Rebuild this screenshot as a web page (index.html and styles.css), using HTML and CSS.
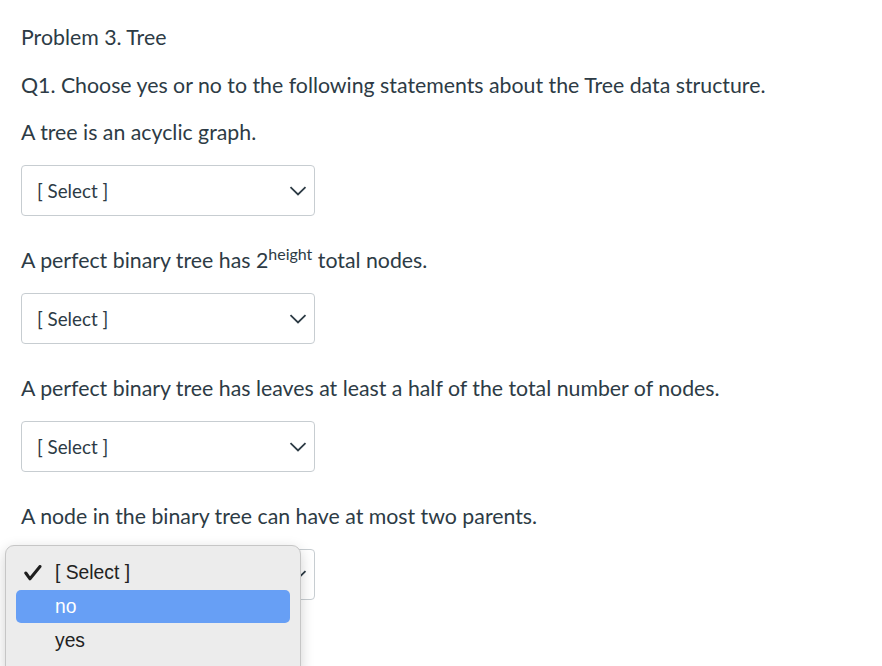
FILE: index.html
```html
<!DOCTYPE html>
<html>
<head>
<meta charset="utf-8">
<link rel="stylesheet" href="styles.css">
</head>
<body>
<div class="page">
  <p class="line">Problem 3. Tree</p>
  <p class="line intro">Q1. Choose yes or no to the following statements about the Tree data structure.</p>
  <p class="line">A tree is an acyclic graph.</p>
  <div class="select"><span>[ Select ]</span><svg class="chev" width="18" height="10" viewBox="0 0 18 10"><path d="M1.5 1.2 L9 8.4 L16.5 1.2" fill="none" stroke="#2d3b45" stroke-width="1.8"/></svg></div>
  <p class="line">A perfect binary tree has 2<sup>height</sup> total nodes.</p>
  <div class="select"><span>[ Select ]</span><svg class="chev" width="18" height="10" viewBox="0 0 18 10"><path d="M1.5 1.2 L9 8.4 L16.5 1.2" fill="none" stroke="#2d3b45" stroke-width="1.8"/></svg></div>
  <p class="line">A perfect binary tree has leaves at least a half of the total number of nodes.</p>
  <div class="select"><span>[ Select ]</span><svg class="chev" width="18" height="10" viewBox="0 0 18 10"><path d="M1.5 1.2 L9 8.4 L16.5 1.2" fill="none" stroke="#2d3b45" stroke-width="1.8"/></svg></div>
  <p class="line">A node in the binary tree can have at most two parents.</p>
  <div class="select-wrap">
    <div class="select"><span class="hidden-label">[ Select ]</span><svg class="chev" width="18" height="10" viewBox="0 0 18 10"><path d="M1.5 1.2 L9 8.4 L16.5 1.2" fill="none" stroke="#2d3b45" stroke-width="1.8"/></svg></div>
    <div class="menu">
      <div class="opt"><span class="check"><svg width="18" height="16" viewBox="0 0 18 16"><path d="M1.8 8 L6 13.8 L16 1.5" fill="none" stroke="#1e1e1e" stroke-width="3" stroke-linecap="round" stroke-linejoin="round"/></svg></span><span>[ Select ]</span></div>
      <div class="opt active"><span class="check"></span><span>no</span></div>
      <div class="opt"><span class="check"></span><span>yes</span></div>
    </div>
  </div>
</div>
</body>
</html>
```
FILE: styles.css
```css
html, body {
  margin: 0;
  padding: 0;
  background: #ffffff;
}
.page {
  box-sizing: border-box;
  min-height: 666px;
  padding: 22px 21px 0 21px;
  font-family: Lato, "Liberation Sans", sans-serif;
  color: #2d3b45;
}
.line {
  margin: 0 0 18px 0;
  font-size: 21.3px;
  line-height: 30px;
}
.line.intro {
  margin-bottom: 17px;
}
.line sup {
  font-size: 16px;
  line-height: 0;
  vertical-align: 0;
  position: relative;
  top: -8px;
}
.select {
  box-sizing: border-box;
  width: 294px;
  height: 51px;
  border: 1px solid #c7cdd1;
  border-radius: 4px;
  display: flex;
  align-items: center;
  justify-content: space-between;
  padding: 0 7px 0 15px;
  font-size: 18.8px;
  margin-bottom: 29px;
  background: #fff;
}
.chev {
  display: block;
  margin-top: 1px;
}
.select-wrap {
  position: relative;
}
.hidden-label {
  visibility: hidden;
}
.menu {
  position: absolute;
  left: -16px;
  top: -4px;
  width: 296px;
  height: 130px;
  box-sizing: border-box;
  background: #ececec;
  border: 1px solid #c6c6c6;
  border-radius: 9px;
  box-shadow: 0 4px 14px rgba(0,0,0,0.18);
  padding: 10px 10px 0 10px;
  font-family: "Liberation Sans", Arial, sans-serif;
  font-size: 19.3px;
  color: #222;
}
.opt {
  height: 33px;
  display: flex;
  align-items: center;
  border-radius: 5px;
  margin-bottom: 1px;
}
.opt.active {
  background: #679ff5;
  color: #fff;
}
.check {
  display: flex;
  align-items: center;
  width: 39px;
  box-sizing: border-box;
  padding-left: 8px;
}
.check svg {
  display: block;
}
```
